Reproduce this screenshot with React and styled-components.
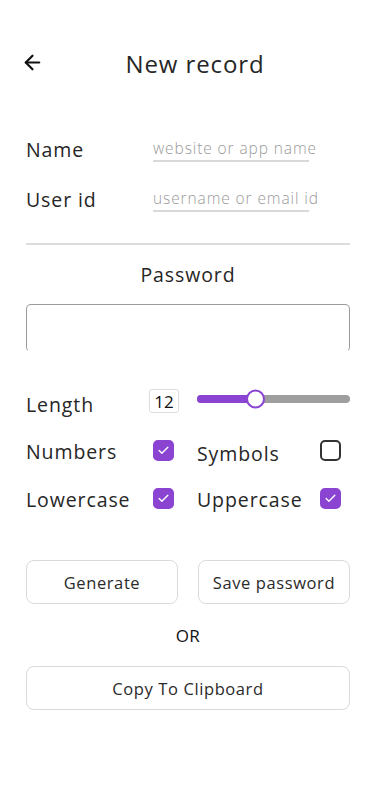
import styled, { createGlobalStyle } from "styled-components";
import { ArrowLeft, Check } from "lucide-react";

const GlobalStyle = createGlobalStyle`
  * { box-sizing: border-box; }
  body {
    margin: 0;
    background: #fff;
    font-family: "Open Sans", "Noto Sans", sans-serif;
    color: #262626;
  }
`;

const Page = styled.div`
  width: 375px;
  min-height: 812px;
  padding: 0 25px 0 26px;
  display: flex;
  flex-direction: column;
`;

const Header = styled.div`
  margin-top: 47px;
  height: 32px;
  display: grid;
  grid-template-columns: 1fr auto 1fr;
  align-items: center;
`;

const BackButton = styled.button`
  justify-self: start;
  margin: -3px 0 0 -5px;
  padding: 0;
  border: none;
  background: none;
  display: flex;
  color: #111;
`;

const Title = styled.h1`
  margin: 0 0 0 14px;
  font-size: 24px;
  font-weight: 400;
  letter-spacing: 0.9px;
`;

const Field = styled.label`
  height: 30px;
  margin-top: ${(p) => p.$top}px;
  display: grid;
  grid-template-columns: 127px 180px;
  align-items: center;
`;

const Label = styled.span`
  font-size: 19.5px;
  font-weight: 400;
  letter-spacing: 0.9px;
  white-space: nowrap;
`;

const LineInput = styled.input`
  width: 180px;
  border: none;
  padding: 0 0 3px 0;
  font-family: inherit;
  font-size: 15.5px;
  font-weight: 300;
  letter-spacing: 0.9px;
  color: #333;
  outline: none;
  background: linear-gradient(#d9d9d9, #d9d9d9) no-repeat left bottom / 156px 2px;
  &::placeholder {
    color: #9a9a9a;
  }
`;

const Divider = styled.hr`
  margin: 29px 0 0;
  border: none;
  height: 2px;
  background: #dcdcdc;
`;

const SectionTitle = styled.div`
  margin-top: 18px;
  text-align: center;
  font-size: 19.5px;
  letter-spacing: 0.9px;
  line-height: 24px;
`;

const PasswordBox = styled.input`
  margin-top: 17px;
  height: 48px;
  width: 100%;
  border: 1px solid #9a9a9a;
  border-bottom-color: transparent;
  border-radius: 5px;
  padding: 0 12px;
  font-family: inherit;
  font-size: 16px;
  outline: none;
`;

const LengthRow = styled.div`
  margin-top: 32px;
  height: 28px;
  display: grid;
  grid-template-columns: 123px 30px 18px 1fr;
  align-items: center;
`;

const LengthLabel = styled(Label)`
  padding-top: 7px;
`;

const NumberBox = styled.div`
  grid-column: 2;
  height: 24px;
  border: 1px solid #dedede;
  border-radius: 3px;
  display: flex;
  align-items: center;
  justify-content: center;
  font-size: 17px;
  color: #111;
`;

const Slider = styled.div`
  grid-column: 4;
  position: relative;
  height: 8px;
  margin-top: -4px;
  border-radius: 4px;
  background: #9e9e9e;
`;

const SliderFill = styled.div`
  height: 100%;
  border-radius: 4px;
  background: #8b44d2;
`;

const Thumb = styled.div`
  position: absolute;
  top: 50%;
  width: 19px;
  height: 19px;
  margin-left: -9px;
  transform: translateY(-50%);
  border-radius: 50%;
  border: 2px solid #8b44d2;
  background: #fff;
`;

const Options = styled.div`
  margin-top: 25px;
  display: grid;
  grid-template-columns: 127px 44px 123px 22px;
  grid-auto-rows: 28px;
  row-gap: 20px;
  align-items: center;
`;

const OptionLabel = styled(Label)`
  padding-top: ${(p) => (p.$low ? 4 : 0)}px;
`;

const Box = styled.span`
  width: 21px;
  height: 21px;
  margin-top: -2px;
  border-radius: 5px;
  display: flex;
  align-items: center;
  justify-content: center;
  background: ${(p) => (p.$checked ? "#8b44d2" : "#fff")};
  border: 2px solid ${(p) => (p.$checked ? "#8b44d2" : "#333")};
  color: #fff;
`;

const ButtonRow = styled.div`
  margin-top: 47px;
  display: grid;
  grid-template-columns: 1fr 1fr;
  column-gap: 20px;
`;

const Button = styled.button`
  height: 44px;
  width: 100%;
  border: 1px solid #dadada;
  border-radius: 8px;
  background: #fff;
  font-family: inherit;
  font-size: 16.5px;
  letter-spacing: 0.6px;
  color: #2a2a2a;
  cursor: pointer;
  padding: 0;
`;

const Or = styled.div`
  margin-top: 20px;
  text-align: center;
  font-size: 17px;
  letter-spacing: 0.5px;
  line-height: 24px;
  color: #111;
`;

const CopyButton = styled(Button)`
  margin-top: 18px;
`;

const Checkbox = ({ checked }) => (
  <Box $checked={checked}>{checked && <Check size={13} strokeWidth={2.5} />}</Box>
);

const App = () => {
  const length = 12;
  const pct = ((length - 4) / 21) * 100;

  return (
    <>
      <GlobalStyle />
      <Page>
        <Header>
          <BackButton>
            <ArrowLeft size={23} strokeWidth={2.3} />
          </BackButton>
          <Title>New record</Title>
        </Header>

        <Field $top={55}>
          <Label>Name</Label>
          <LineInput placeholder="website or app name" />
        </Field>
        <Field $top={20}>
          <Label>User id</Label>
          <LineInput placeholder="username or email id" />
        </Field>

        <Divider />

        <SectionTitle>Password</SectionTitle>
        <PasswordBox />

        <LengthRow>
          <LengthLabel>Length</LengthLabel>
          <NumberBox>{length}</NumberBox>
          <Slider>
            <SliderFill style={{ width: `${pct}%` }} />
            <Thumb style={{ left: `${pct}%` }} />
          </Slider>
        </LengthRow>

        <Options>
          <OptionLabel>Numbers</OptionLabel>
          <Checkbox checked />
          <OptionLabel $low>Symbols</OptionLabel>
          <Checkbox />
          <OptionLabel>Lowercase</OptionLabel>
          <Checkbox checked />
          <OptionLabel>Uppercase</OptionLabel>
          <Checkbox checked />
        </Options>

        <ButtonRow>
          <Button>Generate</Button>
          <Button>Save password</Button>
        </ButtonRow>
        <Or>OR</Or>
        <CopyButton>Copy To Clipboard</CopyButton>
      </Page>
    </>
  );
};

export default App;
